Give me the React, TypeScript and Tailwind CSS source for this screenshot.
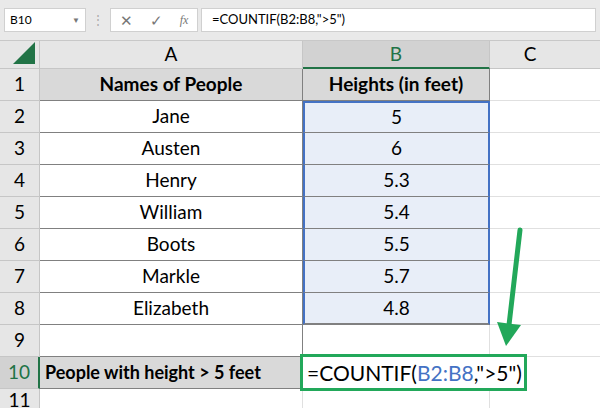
import React from 'react';

const rows: [string, string][] = [
  ['Jane', '5'],
  ['Austen', '6'],
  ['Henry', '5.3'],
  ['William', '5.4'],
  ['Boots', '5.5'],
  ['Markle', '5.7'],
  ['Elizabeth', '4.8'],
];

const font = { fontFamily: 'Lato, "Open Sans", sans-serif' };

export default function App() {
  return (
    <div className="relative w-[600px] h-[408px] overflow-hidden bg-white text-black" style={font}>
      {/* formula bar */}
      <div className="h-[41px] bg-[#e9e9e9] flex items-center px-[4px] border-b border-[#c8c8c8]">
        <div className="w-[82px] h-[24px] bg-white border border-[#d0d0d0] flex items-center justify-between px-[5px] text-[12px]">
          <span>B10</span>
          <span className="text-[8px] text-[#777]">▼</span>
        </div>
        <div className="w-[24px] text-center text-[#aaa] text-[12px]">⋮</div>
        <div className="w-[88px] h-[24px] bg-white border border-[#d0d0d0] flex items-center justify-around text-[#777] text-[15px]">
          <span>✕</span>
          <span>✓</span>
          <span className="italic text-[12px]" style={{ fontFamily: '"Liberation Serif", serif' }}>fx</span>
        </div>
        <div className="flex-1 h-[24px] ml-[3px] bg-white border border-[#d0d0d0] flex items-center pl-[10px] text-[13px]">
          =COUNTIF(B2:B8,"&gt;5")
        </div>
      </div>
      {/* grid */}
      <div className="grid grid-cols-[40px_263px_187px_1fr] grid-rows-[28px_repeat(10,32px)_19px] text-[19px]">
        <div className="bg-[#e6e6e6] border-r border-b border-[#c6c6c6] relative">
          <div className="absolute right-[4px] bottom-[4px] w-0 h-0 border-l-[22px] border-l-transparent border-b-[22px] border-b-[#217346]" />
        </div>
        <div className="bg-[#e6e6e6] border-r border-b border-[#c6c6c6] flex items-center justify-center">A</div>
        <div className="bg-[#d2d2d2] border-r border-b-2 border-b-[#217346] border-r-[#c6c6c6] flex items-center justify-center text-[#217346]">B</div>
        <div className="bg-[#e6e6e6] border-b border-[#c6c6c6] flex items-center justify-center pr-[30px]">C</div>

        {/* row 1 */}
        <div className="bg-[#e6e6e6] border-r border-b border-[#c6c6c6] flex items-center justify-center">1</div>
        <div className="bg-[#d9d9d9] border-r border-b border-[#808080] flex items-center justify-center font-bold">Names of People</div>
        <div className="bg-[#d9d9d9] border-r border-b border-[#808080] flex items-center justify-center font-bold">Heights (in feet)</div>
        <div className="border-b border-[#e0e0e0]" />

        {rows.map(([n, h], i) => (
          <React.Fragment key={n}>
            <div className="bg-[#e6e6e6] border-r border-b border-[#c6c6c6] flex items-center justify-center">{i + 2}</div>
            <div className="border-r border-b border-[#808080] flex items-center justify-center">{n}</div>
            <div className={`bg-[#e8eef8] border-x-2 border-x-[#4472c4] border-b border-b-[#808080] flex items-center justify-center ${i === 0 ? 'border-t-2 border-t-[#4472c4]' : ''} ${i === 6 ? 'border-b-2 border-b-[#4472c4]' : ''}`}>{h}</div>
            <div className="border-b border-[#e0e0e0]" />
          </React.Fragment>
        ))}

        {/* row 9 */}
        <div className="bg-[#e6e6e6] border-r border-b border-[#c6c6c6] flex items-center justify-center">9</div>
        <div className="border-r border-b border-[#808080]" />
        <div className="border-r border-b border-[#e0e0e0]" />
        <div className="border-b border-[#e0e0e0]" />

        {/* row 10 */}
        <div className="bg-[#d2d2d2] border-r-2 border-r-[#217346] border-b border-b-[#c6c6c6] flex items-center justify-center text-[#217346]">10</div>
        <div className="bg-[#d9d9d9] border-r border-b border-[#808080] flex items-center pl-[5px] font-bold text-[18px]">People with height &gt; 5 feet</div>
        <div className="col-span-2 relative">
          <div className="absolute left-[-3px] top-[-3px] h-[37px] w-[227px] border-[3px] border-[#22a85a] bg-white flex items-center pl-[4px] text-[21px] whitespace-nowrap">
            =COUNTIF(<span className="text-[#4472c4]">B2:B8</span>,"&gt;5")
          </div>
        </div>

        {/* row 11 */}
        <div className="bg-[#e6e6e6] border-r border-[#c6c6c6] flex items-start justify-center leading-[22px]">11</div>
        <div className="border-r border-[#e0e0e0]" />
        <div className="border-r border-[#e0e0e0]" />
        <div />
      </div>
      {/* arrow */}
      <svg className="absolute left-0 top-0 pointer-events-none" width="600" height="408">
        <line x1="520" y1="230" x2="509" y2="325" stroke="#22a85a" strokeWidth="5" strokeLinecap="round" />
        <polygon points="497,322 521,325 506,346" fill="#22a85a" />
      </svg>
    </div>
  );
}
